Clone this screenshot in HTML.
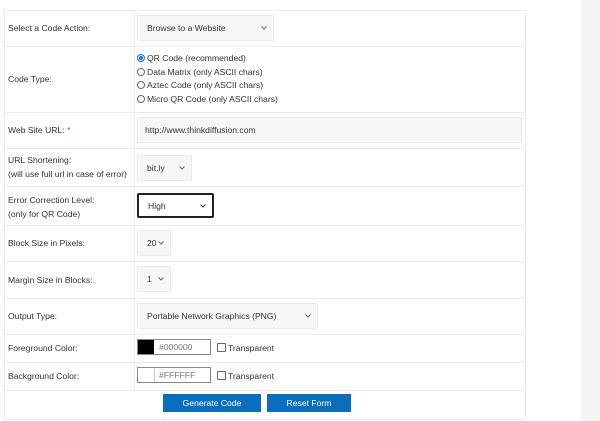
<!DOCTYPE html><html><head><style>
body{margin:0;width:600px;height:421px;background:#fff;font-family:"Liberation Sans",sans-serif;font-size:8.6px;color:#333;position:relative;overflow:hidden}
.side{position:absolute;left:581px;top:0;width:19px;height:421px;background:#f4f4f4}
.t{position:absolute;left:4px;top:10px;width:520px;border:1px solid #ececec}
.r{position:absolute;left:4px;width:520px;border-top:1px solid #ececec}
.v{position:absolute;left:134px;top:10px;width:1px;height:380px;background:#ececec}
.l{position:absolute;left:8px;line-height:14px}
.s{position:absolute;background:#f7f7f7;border:1px solid #ebebeb;border-radius:2px;box-sizing:border-box;padding-left:9px;display:flex;align-items:center}
.s svg{position:absolute;right:6px;top:50%;margin-top:-2px}
.c{position:absolute;border:1px solid #888;box-sizing:border-box;height:16px}
.btn{position:absolute;top:394px;height:18px;background:#0a6ebd;color:#fff;text-align:center;line-height:18px;font-size:8.6px}
.cb{display:inline-block;width:7px;height:7px;border:1px solid #666;border-radius:1px;vertical-align:-1px;margin-right:2px}
.rd{display:inline-block;width:6px;height:6px;border:1px solid #666;border-radius:50%;vertical-align:-1px;margin-right:2px}
</style></head><body>
<div class="side"></div>
<div class="t" style="height:408px"></div>
<div class="v"></div>
<div class="r" style="top:46px"></div><div class="r" style="top:112px"></div><div class="r" style="top:148px"></div><div class="r" style="top:186px"></div><div class="r" style="top:225px"></div><div class="r" style="top:261px"></div><div class="r" style="top:298px"></div><div class="r" style="top:334px"></div><div class="r" style="top:362px"></div><div class="r" style="top:390px"></div>
<div style="position:absolute;left:164px;top:390px;width:1px;height:29px;background:#ececec"></div>
<div class="l" style="top:21px">Select a Code Action:</div>
<div class="l" style="top:72px">Code Type:</div>
<div class="l" style="top:123px">Web Site URL: <span style="color:#d33">*</span></div>
<div class="l" style="top:153px">URL Shortening:<br>(will use full url in case of error)</div>
<div class="l" style="top:193px">Error Correction Level:<br>(only for QR Code)</div>
<div class="l" style="top:236px">Block Size in Pixels:</div>
<div class="l" style="top:273px">Margin Size in Blocks:</div>
<div class="l" style="top:309px">Output Type:</div>
<div class="l" style="top:341px">Foreground Color:</div>
<div class="l" style="top:369px">Background Color:</div>
<div class="s" style="left:137px;top:15px;width:137px;height:26px">Browse to a Website<svg width="6" height="4"><path d="M0.5 0.5L3 3L5.5 0.5" stroke="#666" fill="none"/></svg></div>
<div style="position:absolute;left:137px;top:52px;line-height:13.5px">
<div><span class="rd" style="background:#1a73e8;border-color:#1a73e8;box-shadow:inset 0 0 0 1px #fff"></span>QR Code (recommended)</div>
<div><span class="rd"></span>Data Matrix (only ASCII chars)</div>
<div><span class="rd"></span>Aztec Code (only ASCII chars)</div>
<div><span class="rd"></span>Micro QR Code (only ASCII chars)</div></div>
<div class="s" style="left:137px;top:117px;width:385px;height:26px;padding-left:7px">http://www.thinkdiffusion.com</div>
<div class="s" style="left:137px;top:155px;width:55px;height:26px">bit.ly<svg width="6" height="4"><path d="M0.5 0.5L3 3L5.5 0.5" stroke="#666" fill="none"/></svg></div>
<div class="s" style="left:137px;top:193px;width:77px;height:25px;background:#fff;border:2px solid #222;border-radius:2px">High<svg width="6" height="4"><path d="M0.5 0.5L3 3L5.5 0.5" stroke="#333" fill="none"/></svg></div>
<div class="s" style="left:137px;top:230px;width:34px;height:26px">20<svg width="6" height="4"><path d="M0.5 0.5L3 3L5.5 0.5" stroke="#666" fill="none"/></svg></div>
<div class="s" style="left:137px;top:266px;width:34px;height:26px">1<svg width="6" height="4"><path d="M0.5 0.5L3 3L5.5 0.5" stroke="#666" fill="none"/></svg></div>
<div class="s" style="left:137px;top:303px;width:181px;height:26px">Portable Network Graphics (PNG)<svg width="6" height="4"><path d="M0.5 0.5L3 3L5.5 0.5" stroke="#666" fill="none"/></svg></div>
<div class="c" style="left:137px;top:339px;width:74px;background:#fff"><div style="position:absolute;left:0;top:0;width:16px;height:14px;background:#000"></div><span style="position:absolute;left:21px;top:2px;color:#777">#000000</span></div>
<div style="position:absolute;left:217px;top:343px"><span class="cb"></span>Transparent</div>
<div class="c" style="left:137px;top:367px;width:74px;background:#fff"><div style="position:absolute;left:16px;top:0;width:1px;height:14px;background:#ccc"></div><span style="position:absolute;left:21px;top:2px;color:#777">#FFFFFF</span></div>
<div style="position:absolute;left:217px;top:371px"><span class="cb"></span>Transparent</div>
<div class="btn" style="left:163px;width:98px">Generate Code</div>
<div class="btn" style="left:267px;width:84px">Reset Form</div>
</body></html>
